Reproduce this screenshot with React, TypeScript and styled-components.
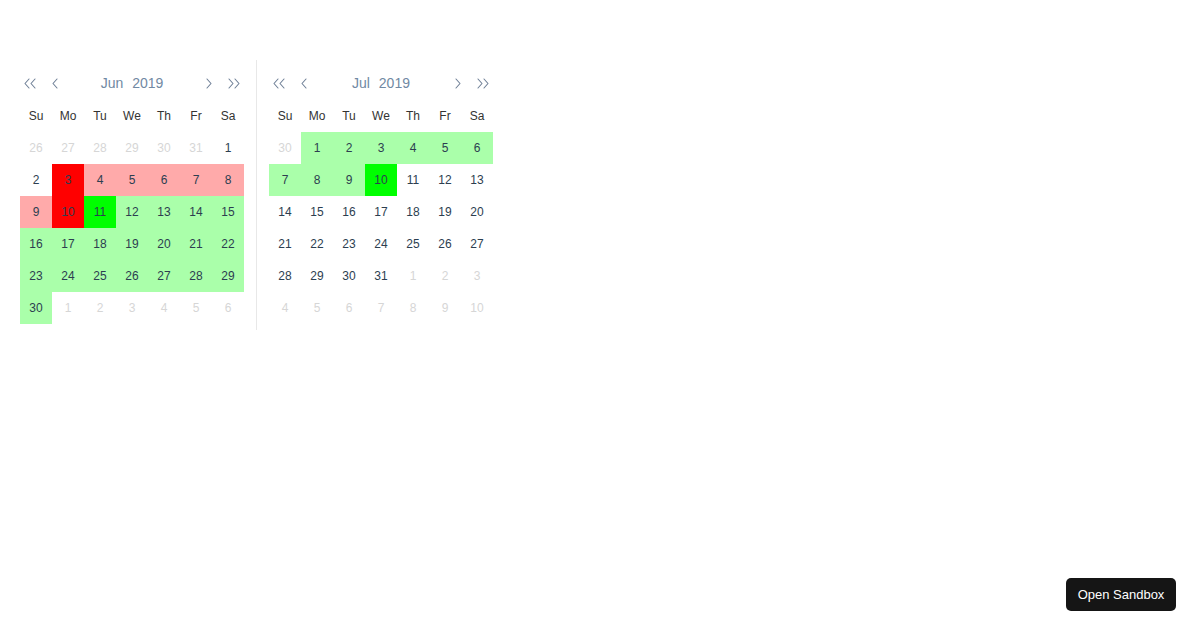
import React from 'react';
import styled, { createGlobalStyle } from 'styled-components';

const GlobalStyle = createGlobalStyle`
  html, body {
    margin: 0;
    padding: 0;
    background: #ffffff;
    font-family: "Liberation Sans", Arial, sans-serif;
  }
`;

const Page = styled.div`
  padding: 60px 8px 0 8px;
  display: flex;
`;

const Panel = styled.div<{ $divider?: boolean }>`
  width: 224px;
  padding: 7px 12px 6px 12px;
  border-right: ${p => (p.$divider ? '1px solid #e8e8e8' : 'none')};
`;

const Header = styled.div`
  height: 32px;
  margin-bottom: 1px;
  display: flex;
  align-items: center;
  gap: 5px;
`;

const NavButton = styled.button`
  width: 20px;
  height: 20px;
  padding: 0;
  border: none;
  background: transparent;
  display: flex;
  align-items: center;
  justify-content: center;
  color: #6e7f96;
  cursor: pointer;
`;

const Title = styled.div`
  flex: 1;
  text-align: center;
  font-size: 14px;
  color: #7189a3;
  word-spacing: 5px;
`;

const Grid = styled.div`
  display: grid;
  grid-template-columns: repeat(7, 32px);
  grid-auto-rows: 32px;
`;

const WeekDay = styled.div`
  display: flex;
  align-items: center;
  justify-content: center;
  font-size: 12px;
  color: #333333;
`;

type Tone = 'none' | 'red' | 'pink' | 'lime' | 'mint';

const toneColors: Record<Tone, string> = {
  none: 'transparent',
  red: '#ff0000',
  pink: '#ffaaaa',
  lime: '#00ff00',
  mint: '#aaffaa',
};

const Day = styled.div<{ $tone: Tone; $faded?: boolean }>`
  display: flex;
  align-items: center;
  justify-content: center;
  font-size: 12px;
  background: ${p => toneColors[p.$tone]};
  color: ${p => (p.$faded ? '#d6d6d6' : '#2c3e50')};
`;

const SandboxButton = styled.button`
  position: fixed;
  right: 24px;
  bottom: 19px;
  width: 110px;
  height: 33px;
  padding: 0;
  border: none;
  border-radius: 5px;
  background: #151515;
  color: #ffffff;
  font-family: "Liberation Sans", Arial, sans-serif;
  font-size: 13px;
`;

const Chevron = ({ dir, double }: { dir: 'left' | 'right'; double?: boolean }) => {
  const one = dir === 'left' ? 'M5 1 L1 5.5 L5 10' : 'M1 1 L5 5.5 L1 10';
  return (
    <svg width={double ? 12 : 6} height="11" viewBox={double ? '0 0 12 11' : '0 0 6 11'} fill="none"
      stroke="currentColor" strokeWidth="1.1" strokeLinecap="round" strokeLinejoin="round">
      <path d={one} />
      {double && <path d={one} transform="translate(6 0)" />}
    </svg>
  );
};

type Cell = { n: number; faded?: boolean; tone?: Tone };

const WEEK = ['Su', 'Mo', 'Tu', 'We', 'Th', 'Fr', 'Sa'];

const buildMonth = (
  prevTail: number[],
  days: number,
  nextCount: number,
  toneOf: (d: number) => Tone,
): Cell[] => [
  ...prevTail.map(n => ({ n, faded: true })),
  ...Array.from({ length: days }, (_, i) => ({ n: i + 1, tone: toneOf(i + 1) })),
  ...Array.from({ length: nextCount }, (_, i) => ({ n: i + 1, faded: true })),
];

const june = buildMonth([26, 27, 28, 29, 30, 31], 30, 6, d => {
  if (d === 3 || d === 10) return 'red';
  if (d === 11) return 'lime';
  if (d >= 4 && d <= 9) return 'pink';
  if (d >= 12) return 'mint';
  return 'none';
});

const july = buildMonth([30], 31, 10, d => {
  if (d === 10) return 'lime';
  if (d <= 9) return 'mint';
  return 'none';
});

const Calendar = ({ title, cells, divider }: { title: string; cells: Cell[]; divider?: boolean }) => (
  <Panel $divider={divider}>
    <Header>
      <NavButton><Chevron dir="left" double /></NavButton>
      <NavButton><Chevron dir="left" /></NavButton>
      <Title>{title}</Title>
      <NavButton><Chevron dir="right" /></NavButton>
      <NavButton><Chevron dir="right" double /></NavButton>
    </Header>
    <Grid>
      {WEEK.map(w => <WeekDay key={w}>{w}</WeekDay>)}
      {cells.map((c, i) => (
        <Day key={i} $tone={c.tone ?? 'none'} $faded={c.faded}>{c.n}</Day>
      ))}
    </Grid>
  </Panel>
);

const App = () => (
  <>
    <GlobalStyle />
    <Page>
      <Calendar title="Jun 2019" cells={june} divider />
      <Calendar title="Jul 2019" cells={july} />
    </Page>
    <SandboxButton>Open Sandbox</SandboxButton>
  </>
);

export default App;
